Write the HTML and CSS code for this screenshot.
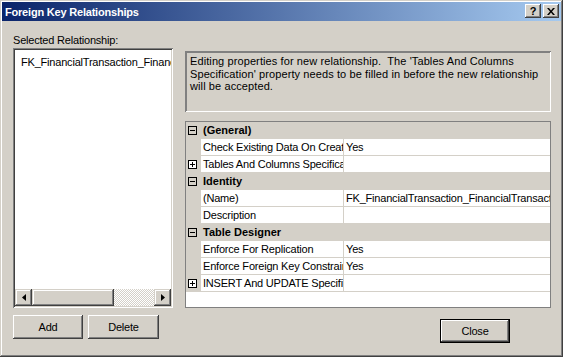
FILE: index.html
```html
<!DOCTYPE html>
<html lang="en">
<head>
    <meta charset="UTF-8">
    <title>Foreign Key Relationships</title>
    <link rel="stylesheet" href="styles.css">
</head>
<body>
    <div class="window">
        <div class="titlebar">
            <span class="title">Foreign Key Relationships</span>
            <div class="caption-buttons">
                <button class="caption-btn help">?</button>
                <button class="caption-btn">
                    <svg width="8" height="7" viewBox="0 0 8 7">
                        <path d="M0 0h2l2 2.5 2-2.5h2l-3 3.5 3 3.5h-2l-2-2.5-2 2.5h-2l3-3.5z" fill="#000"/>
                    </svg>
                </button>
            </div>
        </div>

        <div class="content">
            <div class="left-pane">
                <div class="label">Selected Relationship:</div>
                <div class="listbox">
                    <div class="list-items">
                        <div class="list-item">FK_FinancialTransaction_FinancialTransactionType</div>
                    </div>
                    <div class="hscroll">
                        <div class="sb-btn">
                            <svg width="4" height="7" viewBox="0 0 4 7"><path d="M4 0v7L0 3.5z" fill="#000"/></svg>
                        </div>
                        <div class="sb-thumb"></div>
                        <div class="sb-track"></div>
                        <div class="sb-btn">
                            <svg width="4" height="7" viewBox="0 0 4 7"><path d="M0 0v7l4-3.5z" fill="#000"/></svg>
                        </div>
                    </div>
                </div>
                <div class="left-buttons">
                    <button class="btn btn-add">Add</button>
                    <button class="btn btn-delete">Delete</button>
                </div>
            </div>

            <div class="right-pane">
                <div class="info">
                    Editing properties for new relationship.&nbsp; The 'Tables And Columns<br>
                    Specification' property needs to be filled in before the new relationship<br>
                    will be accepted.
                </div>

                <div class="propgrid">
                    <div class="row category">
                        <div class="margin"><span class="expander minus"></span></div>
                        <div class="cat-name">(General)</div>
                    </div>
                    <div class="row">
                        <div class="margin"></div>
                        <div class="name">Check Existing Data On Creation Or Re-Enabling</div>
                        <div class="value">Yes</div>
                    </div>
                    <div class="row">
                        <div class="margin"><span class="expander plus"></span></div>
                        <div class="name">Tables And Columns Specification</div>
                        <div class="value"></div>
                    </div>
                    <div class="row category">
                        <div class="margin"><span class="expander minus"></span></div>
                        <div class="cat-name">Identity</div>
                    </div>
                    <div class="row">
                        <div class="margin"></div>
                        <div class="name">(Name)</div>
                        <div class="value">FK_FinancialTransaction_FinancialTransactionType</div>
                    </div>
                    <div class="row">
                        <div class="margin"></div>
                        <div class="name">Description</div>
                        <div class="value"></div>
                    </div>
                    <div class="row category">
                        <div class="margin"><span class="expander minus"></span></div>
                        <div class="cat-name">Table Designer</div>
                    </div>
                    <div class="row">
                        <div class="margin"></div>
                        <div class="name">Enforce For Replication</div>
                        <div class="value">Yes</div>
                    </div>
                    <div class="row">
                        <div class="margin"></div>
                        <div class="name">Enforce Foreign Key Constraint</div>
                        <div class="value">Yes</div>
                    </div>
                    <div class="row">
                        <div class="margin"><span class="expander plus"></span></div>
                        <div class="name">INSERT And UPDATE Specification</div>
                        <div class="value"></div>
                    </div>
                </div>

                <div class="right-buttons">
                    <button class="btn btn-close">Close</button>
                </div>
            </div>
        </div>
    </div>
</body>
</html>
```

FILE: styles.css
```css
body {
    margin: 0;
    background: #d4d0c8;
    font-family: "Liberation Sans", Arial, sans-serif;
    font-size: 11px;
    letter-spacing: -0.2px;
    color: #000;
}

.window {
    width: 563px;
    height: 357px;
    box-sizing: border-box;
    padding: 2px;
    background: #d4d0c8;
    box-shadow: inset -1px -1px #404040, inset 1px 1px #d4d0c8,
                inset -2px -2px #808080, inset 2px 2px #fff;
}

.titlebar {
    height: 19px;
    display: flex;
    align-items: center;
    justify-content: space-between;
    padding: 0 2px 0 3px;
    background: linear-gradient(to right, #0a246a, #a6caf0);
}

.title {
    color: #fff;
    font-weight: bold;
    letter-spacing: -0.2px;
}

.caption-buttons {
    display: flex;
    gap: 2px;
    margin-top: -1px;
}

.caption-btn {
    width: 16px;
    height: 14px;
    padding: 0;
    border: none;
    display: flex;
    align-items: center;
    justify-content: center;
    background: #d4d0c8;
    font-family: "Liberation Sans", Arial, sans-serif;
    font-weight: bold;
    font-size: 11px;
    box-shadow: inset -1px -1px #404040, inset 1px 1px #fff,
                inset -2px -2px #808080;
}

.content {
    display: flex;
    padding: 13px 10px 0 11px;
}

.left-pane {
    width: 160px;
    display: flex;
    flex-direction: column;
}

.label {
    height: 13px;
    line-height: 13px;
    margin-bottom: 1px;
}

.listbox {
    height: 260px;
    box-sizing: border-box;
    padding: 2px;
    background: #fff;
    display: flex;
    flex-direction: column;
    box-shadow: inset 1px 1px #808080, inset -1px -1px #fff,
                inset 2px 2px #404040, inset -2px -2px #d4d0c8;
}

.list-items {
    flex: 1;
    overflow: hidden;
    padding: 6px 0 0 6px;
}

.list-item {
    white-space: nowrap;
    line-height: 13px;
}

.hscroll {
    height: 17px;
    display: flex;
}

.sb-btn,
.sb-thumb {
    background: #d4d0c8;
    box-shadow: inset -1px -1px #404040, inset 1px 1px #d4d0c8,
                inset -2px -2px #808080, inset 2px 2px #fff;
}

.sb-btn {
    width: 17px;
    display: flex;
    align-items: center;
    justify-content: center;
}

.sb-thumb {
    width: 82px;
}

.sb-track {
    flex: 1;
    background-image: conic-gradient(#fff 25%, #d4d0c8 0 50%, #fff 0 75%, #d4d0c8 0);
    background-size: 2px 2px;
}

.btn {
    height: 24px;
    padding: 0;
    border: none;
    background: #d4d0c8;
    font-family: "Liberation Sans", Arial, sans-serif;
    font-size: 11px;
    letter-spacing: -0.2px;
    color: #000;
    box-shadow: inset -1px -1px #404040, inset 1px 1px #fff,
                inset -2px -2px #808080;
}

.left-buttons {
    display: flex;
    gap: 5px;
    margin-top: 7px;
}

.btn-add {
    width: 70px;
}

.btn-delete {
    width: 71px;
}

.right-pane {
    width: 366px;
    margin-left: 12px;
    margin-top: 17px;
    display: flex;
    flex-direction: column;
}

.info {
    height: 61px;
    box-sizing: border-box;
    padding: 4px 3px 0 5px;
    line-height: 12.5px;
    letter-spacing: 0.1px;
    white-space: nowrap;
    box-shadow: inset 1px 1px #808080, inset -1px -1px #fff,
                inset 2px 2px #808080;
}

.propgrid {
    height: 187px;
    margin-top: 9px;
    box-sizing: border-box;
    border: 1px solid #808080;
    background: #fff;
}

.row {
    display: flex;
    height: 16px;
    line-height: 16px;
    border-bottom: 1px solid #d4d0c8;
}

.row.category {
    background: #d4d0c8;
}

.margin {
    width: 15px;
    flex-shrink: 0;
    background: #d4d0c8;
    display: flex;
    align-items: center;
    padding-left: 2px;
    box-sizing: border-box;
}

.expander {
    width: 9px;
    height: 9px;
    box-sizing: border-box;
    border: 1px solid #000;
    position: relative;
}

.expander.plus {
    background: #fff;
}

.expander::before,
.expander.plus::after {
    content: "";
    position: absolute;
    background: #000;
}

.expander::before {
    left: 1px;
    top: 3px;
    width: 5px;
    height: 1px;
}

.expander.plus::after {
    left: 3px;
    top: 1px;
    width: 1px;
    height: 5px;
}

.name {
    width: 143px;
    flex-shrink: 0;
    box-sizing: border-box;
    padding-left: 2px;
    border-right: 1px solid #d4d0c8;
    white-space: nowrap;
    overflow: hidden;
}

.cat-name {
    padding-left: 2px;
    font-weight: bold;
    letter-spacing: 0;
}

.value {
    flex: 1;
    padding-left: 2px;
    white-space: nowrap;
    overflow: hidden;
}

.right-buttons {
    display: flex;
    justify-content: flex-end;
    margin-top: 11px;
    padding-right: 41px;
}

.btn-close {
    width: 70px;
    box-shadow: inset 0 0 0 1px #000, inset -2px -2px #404040,
                inset 2px 2px #fff, inset -3px -3px #808080;
}
```
